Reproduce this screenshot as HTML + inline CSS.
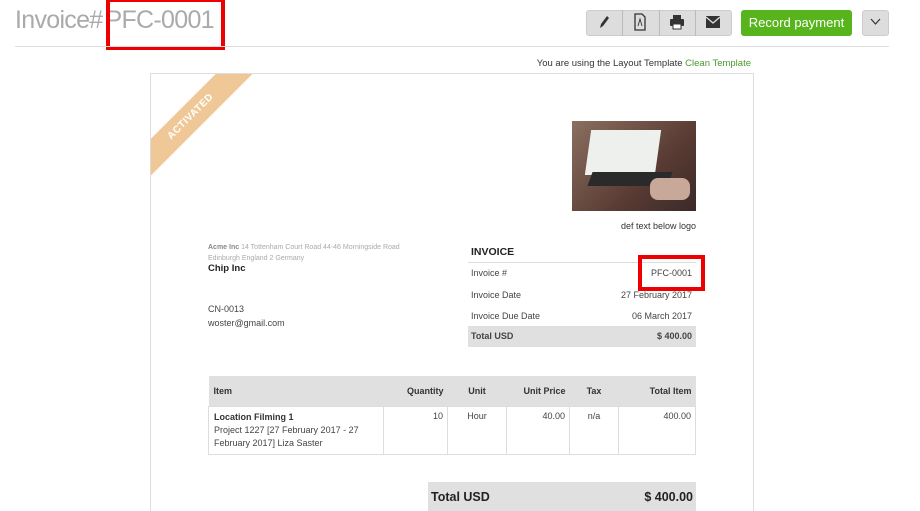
<!DOCTYPE html>
<html><head><meta charset="utf-8"><style>
*{margin:0;padding:0;box-sizing:border-box}
html,body{width:920px;height:511px;overflow:hidden}
body{background:#fff;font-family:"Liberation Sans",sans-serif;color:#333;position:relative}
.a{position:absolute}
.btn{position:absolute;top:10px;height:26px;background:#ddd;border:1px solid #ccc}
.s{font-size:9px;color:#444}
table{border-collapse:collapse}
</style></head><body>
<div class="a" style="left:15px;top:6px;font-size:25px;color:#aaa;letter-spacing:-0.7px">Invoice#<span style="margin-left:3px">PFC-0001</span></div>
<div class="a" style="left:106px;top:-2px;width:119px;height:52px;border:4px solid #e00"></div>
<div class="a" style="left:15px;top:46px;width:874px;height:1px;background:#ddd"></div>
<div class="btn" style="left:586px;width:146px;border-radius:3px"></div>
<div class="a" style="left:622px;top:10px;width:1px;height:26px;background:#bbb"></div>
<div class="a" style="left:659px;top:10px;width:1px;height:26px;background:#bbb"></div>
<div class="a" style="left:695px;top:10px;width:1px;height:26px;background:#bbb"></div>
<svg class="a" style="left:597px;top:14px" width="14" height="16" viewBox="0 0 14 16"><path d="M3 14 L4 10 L10 2 L12 4 L6 12 Z" fill="#333"/></svg>
<svg class="a" style="left:633px;top:13px" width="14" height="18" viewBox="0 0 14 18"><path d="M2 1H9L12 4V17H2Z" fill="none" stroke="#333" stroke-width="1.3"/><path d="M5 13L7 6L9 13" fill="none" stroke="#333" stroke-width="0.9"/></svg>
<svg class="a" style="left:669px;top:14px" width="16" height="16" viewBox="0 0 16 16"><rect x="4" y="1" width="8" height="4" fill="#333"/><rect x="1" y="5" width="14" height="7" rx="1" fill="#333"/><rect x="4" y="10" width="8" height="5" fill="#fff" stroke="#333"/></svg>
<svg class="a" style="left:705px;top:15px" width="16" height="14" viewBox="0 0 16 14"><rect x="1" y="1" width="14" height="12" fill="#333"/><path d="M1 2L8 8L15 2" fill="none" stroke="#ddd" stroke-width="1.3"/></svg>
<div class="a" style="left:741px;top:10px;width:111px;height:26px;background:#58b41c;border-radius:3px;color:#fff;font-size:13px;line-height:26px;text-align:center">Record payment</div>
<div class="btn" style="left:862px;width:27px;border-radius:3px"></div>
<svg class="a" style="left:870px;top:18px" width="11" height="8" viewBox="0 0 11 8"><path d="M1 1L5.5 6L10 1" fill="none" stroke="#333" stroke-width="1.2"/></svg>
<div class="a" style="right:169px;top:58px;font-size:9.5px;color:#333">You are using the Layout Template <span style="color:#4a9a2c">Clean Template</span></div>
<div class="a" style="left:150px;top:73px;width:604px;height:438px;border:1px solid #ddd;border-bottom:none;overflow:hidden">
 <div class="a" style="left:-70px;top:30px;width:220px;height:26px;background:#f0c898;transform:rotate(-45deg);color:#fff;font-size:10px;font-weight:bold;text-align:center;line-height:26px;letter-spacing:0.5px">ACTIVATED</div>
</div>
<div class="a" style="left:572px;top:121px;width:124px;height:90px;background:linear-gradient(135deg,#8a7060,#5a3c34 60%,#3a2a28)"></div>
<div class="a" style="left:588px;top:130px;width:70px;height:45px;background:#eef0ee;transform:skewX(-8deg)"></div>
<div class="a" style="left:590px;top:172px;width:80px;height:14px;background:#2a2a2a;transform:skewX(-20deg)"></div>
<div class="a" style="left:650px;top:178px;width:40px;height:22px;background:#c8a898;border-radius:8px"></div>
<div class="a" style="right:224px;top:221px;font-size:9px;color:#333">def text below logo</div>
<div class="a" style="left:208px;top:242px;font-size:7px;color:#aaa;line-height:11px;width:210px"><b style="color:#888">Acme Inc</b> 14 Tottenham Court Road 44-46 Morningside Road Edinburgh England 2 Germany</div>
<div class="a" style="left:208px;top:263px;font-size:9.5px;font-weight:bold;color:#222">Chip Inc</div>
<div class="a s" style="left:208px;top:302px;line-height:14px">CN-0013<br>woster@gmail.com</div>
<div class="a" style="left:471px;top:246px;font-size:10.5px;font-weight:bold;color:#222">INVOICE</div>
<div class="a" style="left:468px;top:262px;width:228px;height:1px;background:#ddd"></div>
<div class="a s" style="left:471px;top:268px">Invoice #</div><div class="a s" style="right:228px;top:268px">PFC-0001</div>
<div class="a s" style="left:471px;top:290px">Invoice Date</div><div class="a s" style="right:228px;top:290px">27 February 2017</div>
<div class="a s" style="left:471px;top:311px">Invoice Due Date</div><div class="a s" style="right:228px;top:311px">06 March 2017</div>
<div class="a" style="left:468px;top:326px;width:228px;height:21px;background:#e0e0e0"></div>
<div class="a s" style="left:471px;top:331px;font-weight:bold">Total USD</div><div class="a s" style="right:228px;top:331px;font-weight:bold">$ 400.00</div>
<div class="a" style="left:638px;top:255px;width:67px;height:36px;border:4px solid #e00"></div>
<table class="a" style="left:208px;top:376px;width:488px;font-size:9px;color:#444">
<tr style="background:#e0e0e0;height:30px;font-weight:bold;color:#333">
<td style="width:175px;padding-left:5px">Item</td><td style="width:64px;text-align:right;padding-right:4px">Quantity</td><td style="width:59px;text-align:center">Unit</td><td style="width:63px;text-align:right;padding-right:4px">Unit Price</td><td style="width:49px;text-align:center">Tax</td><td style="text-align:right;padding-right:4px">Total Item</td></tr>
<tr style="height:47px;vertical-align:top">
<td style="border:1px solid #ddd;padding:4px 5px;line-height:13px"><b style="color:#333">Location Filming 1</b><br>Project 1227 [27 February 2017 - 27 February 2017] Liza Saster</td>
<td style="border:1px solid #ddd;text-align:right;padding:4px 4px">10</td>
<td style="border:1px solid #ddd;text-align:center;padding-top:4px">Hour</td>
<td style="border:1px solid #ddd;text-align:right;padding:4px 4px">40.00</td>
<td style="border:1px solid #ddd;text-align:center;padding-top:4px">n/a</td>
<td style="border:1px solid #ddd;text-align:right;padding:4px 4px">400.00</td></tr>
</table>
<div class="a" style="left:428px;top:482px;width:268px;height:30px;background:#e0e0e0"></div>
<div class="a" style="left:431px;top:490px;font-size:12.5px;font-weight:bold;color:#222">Total USD</div>
<div class="a" style="right:227px;top:490px;font-size:12.5px;font-weight:bold;color:#222">$ 400.00</div>
</body></html>
